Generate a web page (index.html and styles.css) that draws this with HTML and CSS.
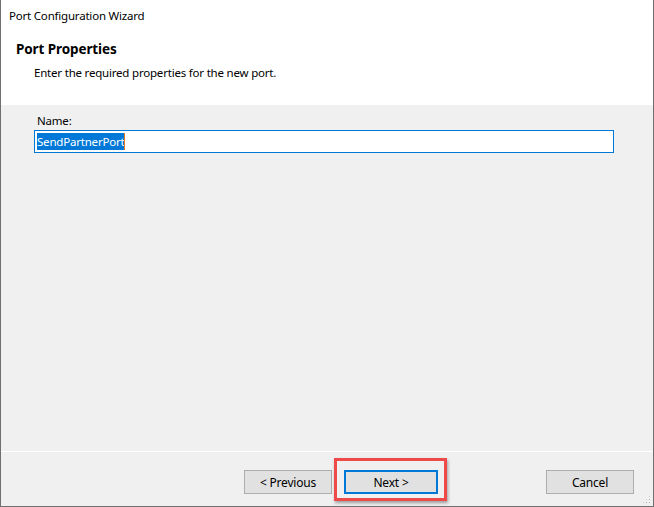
FILE: index.html
```html
<!DOCTYPE html>
<html>
<head>
  <title>Port Configuration Wizard</title>
  <link rel="stylesheet" href="styles.css">
</head>
<body>
  <div class="window">
    <div class="title-bar">Port Configuration Wizard</div>

    <div class="page-header">
      <h2>Port Properties</h2>
      <p>Enter the required properties for the new port.</p>
    </div>

    <div class="page-body">
      <label for="portName">Name:</label>
      <div class="name-box" id="portName"><span class="selected">SendPartnerPort</span><span class="caret"></span></div>
    </div>

    <div class="footer">
      <button class="btn">&lt; Previous</button>
      <div class="highlight">
        <button class="btn btn-default">Next &gt;</button>
      </div>
      <button class="btn btn-cancel">Cancel</button>
      <div class="grip"></div>
    </div>
  </div>
</body>
</html>
```

FILE: styles.css
```css
/* wizard dialog */
html, body {
  margin: 0;
  padding: 0;
}
body {
  font-family: "Noto Sans", "Open Sans", Arial, sans-serif;
  font-size: 11.5px;
  letter-spacing: -0.2px;
  color: #000;
  background-color: #f0f0f0;
}

.window {
  width: 654px;
  height: 507px;
  box-sizing: border-box;
  border-left: 1px solid #6f6f6f;
  border-right: 1px solid #6f6f6f;
  border-bottom: 1px solid #6f6f6f;
  display: flex;
  flex-direction: column;
  background-color: #f0f0f0;
}

.title-bar {
  height: 32px;
  line-height: 32px;
  padding-left: 8px;
  background-color: #fff;
}

.page-header {
  height: 73px;
  background-color: #fff;
}
.page-header h2 {
  margin: 0;
  padding-left: 15px;
  font-size: 13.5px;
  letter-spacing: -0.1px;
  font-weight: bold;
  line-height: 34px;
}
.page-header p {
  margin: 0;
  padding-left: 33px;
  line-height: 14px;
}

.page-body {
  flex: 1;
  padding: 7px 39px 0 33px;
}
.page-body label {
  display: block;
  padding-left: 3px;
  line-height: 18px;
}
.name-box {
  height: 21px;
  border: 1px solid #0078d7;
  background-color: #fff;
  display: flex;
  align-items: center;
  padding-left: 2px;
}
.name-box .selected {
  background-color: #0078d7;
  color: #fff;
  line-height: 17px;
}
.name-box .caret {
  width: 1px;
  height: 17px;
  background-color: #e87722;
}

.footer {
  height: 55px;
  border-top: 1px solid #fff;
  display: flex;
  align-items: flex-start;
  padding: 18px 0 0 243px;
  box-sizing: border-box;
  position: relative;
}
.btn {
  width: 88px;
  height: 24px;
  box-sizing: border-box;
  border: 1px solid #adadad;
  background-color: #e1e1e1;
  font-family: inherit;
  font-size: 12px;
  letter-spacing: -0.2px;
  color: #000;
  padding: 0;
}
.highlight {
  margin: -12px 0 0 2px;
  padding: 9px 6px 4px 7px;
  border: 3px solid #ef4a4a;
  box-shadow: 1px 2px 3px rgba(0, 0, 0, 0.35);
}
.btn-default {
  width: 94px;
  height: 24px;
  border: 2px solid #0078d7;
}
.btn-cancel {
  margin-left: 99px;
}

.grip {
  position: absolute;
  right: 2px;
  bottom: 2px;
  width: 9px;
  height: 9px;
  background-image: radial-gradient(circle, #b0b0b0 1px, transparent 1px);
  background-size: 3px 3px;
  clip-path: polygon(100% 0, 100% 100%, 0 100%);
}
```
